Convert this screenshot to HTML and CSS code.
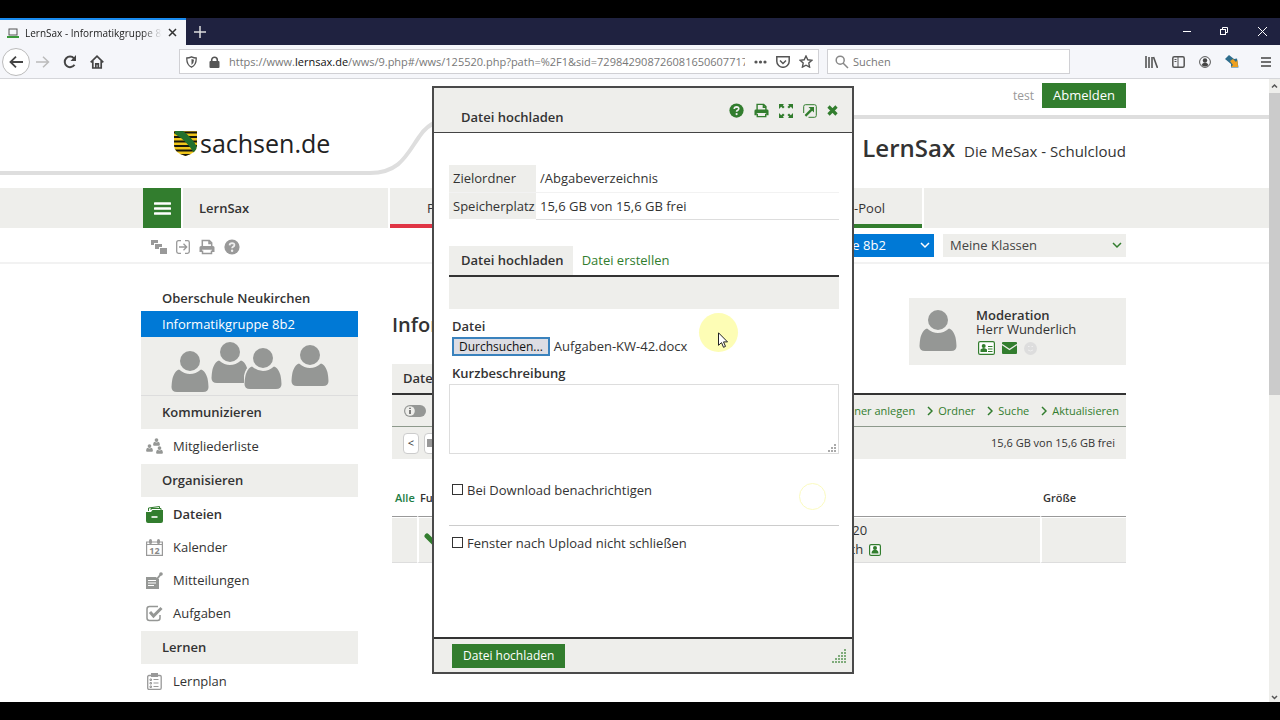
FILE: index.html
```html
<!DOCTYPE html>
<html lang="de">
<head>
	<meta charset="UTF-8">
	<meta name="viewport" content="width=device-width, initial-scale=1.0">
	<title>LernSax - Informatikgruppe 8b2</title>
	<link rel="stylesheet" href="styles.css">
</head>
<body>
	<svg class="sprite" aria-hidden="true">
		<symbol id="person" viewBox="0 0 38 41">
			<circle cx="19" cy="10" r="10"/>
			<path d="M8 18.500Q19 27.500 30 18.500Q37 21 37.500 36Q37.500 41 32 41H6Q.5 41 .5 36Q1 21 8 18.500z"/>
		</symbol>
		<symbol id="help" viewBox="0 0 16 16">
			<circle cx="8" cy="8" r="7.600" fill="currentColor"/>
			<path d="M5.600 6.400Q5.700 4.100 8.100 4.100Q10.500 4.200 10.400 6.100Q10.300 7.300 8.900 7.900Q8.100 8.300 8.100 9.300" fill="none" stroke="#eee" stroke-width="1.800"/>
			<circle cx="8.100" cy="11.800" r="1.200" fill="#eee"/>
		</symbol>
		<symbol id="print" viewBox="0 0 16 16">
			<path d="M3.300 7.500V1.500h7l2.400 2.400v3.600M10 1.500v3h2.700" fill="none" stroke="currentColor" stroke-width="1.500"/>
			<path d="M2 7h12q1.500 0 1.500 1.500V13H13v-2.300H3V13H.5V8.500Q.5 7 2 7z" fill="currentColor"/>
			<path d="M3.500 11.500v3h9v-3" fill="none" stroke="currentColor" stroke-width="1.500"/>
		</symbol>
		<symbol id="chevron" viewBox="0 0 10 10">
			<path d="M1 3l4 4 4-4" fill="none" stroke="currentColor" stroke-width="1.500"/>
		</symbol>
		<symbol id="next" viewBox="0 0 6 10">
			<path d="M1 1l4 4-4 4" fill="none" stroke="currentColor" stroke-width="1.500"/>
		</symbol>
	</svg>

	<div class="tabbar">
		<div class="tab">
			<svg width="12" height="10" viewBox="0 0 12 10"><rect x="2" y="1" width="8" height="6" fill="none" stroke="#555"/><path d="M0 9h12" stroke="#3a9a3a" stroke-width="2"/></svg>
			<span class="tab-title">LernSax - Informatikgruppe 8b2</span>
			<button class="plain" aria-label="Tab schließen"><svg width="9" height="9" viewBox="0 0 9 9"><path d="M1 1l7 7M8 1L1 8" stroke="#333" stroke-width="1.500"/></svg></button>
		</div>
		<button class="plain new-tab" aria-label="Neuer Tab"><svg width="12" height="12" viewBox="0 0 12 12"><path d="M6 0v12M0 6h12" stroke="#ddd" stroke-width="1.500"/></svg></button>
		<div class="window-buttons">
			<button class="plain" aria-label="Minimieren"><svg width="8" height="9" viewBox="0 0 8 9"><path d="M0 4.500h8" stroke="#fff"/></svg></button>
			<button class="plain" aria-label="Verkleinern"><svg width="9" height="9" viewBox="0 0 9 9" fill="none" stroke="#fff"><rect x=".5" y="2.500" width="5" height="5"/><path d="M2.500 2.500v-2h5v5h-2"/></svg></button>
			<button class="plain" aria-label="Schließen"><svg width="9" height="9" viewBox="0 0 9 9"><path d="M0 0l9 9M9 0L0 9" stroke="#fff"/></svg></button>
		</div>
	</div>

	<div class="toolbar">
		<div class="toolbar-nav">
			<button class="plain back" aria-label="Zurück"><svg width="14" height="12" viewBox="0 0 14 12"><path d="M14 6H1.500M7 .7L1.500 6 7 11.300" fill="none" stroke="#444" stroke-width="1.800"/></svg></button>
			<button class="plain" aria-label="Vor"><svg width="14" height="12" viewBox="0 0 14 12"><path d="M0 6h12.500M7 .7L12.500 6 7 11.300" fill="none" stroke="#bbb" stroke-width="1.500"/></svg></button>
			<button class="plain" aria-label="Neu laden"><svg width="14" height="14" viewBox="0 0 14 14"><path d="M11.500 9.700A5.300 5.300 0 1 1 11 3.300" fill="none" stroke="#444" stroke-width="2"/><path d="M13 0v6H7.500z" fill="#444"/></svg></button>
			<button class="plain" aria-label="Startseite"><svg width="14" height="14" viewBox="0 0 14 14" fill="none" stroke="#444" stroke-width="1.700"><path d="M.7 7.300L7 1.200l6.300 6.100M2.800 6v7h8.400V6"/><path d="M5.800 13V8.800h2.500V13"/></svg></button>
		</div>
		<div class="urlbar">
			<svg width="11" height="12" viewBox="0 0 11 12"><path d="M5.500.8Q8 2 10.200 2Q10.500 9 5.500 11.200Q.5 9 .8 2Q3 2 5.500.8z" fill="none" stroke="#555" stroke-width="1.300"/><path d="M5.500 3v6Q8 7 8 3.800z" fill="#555"/></svg>
			<svg class="lock" width="11" height="12" viewBox="0 0 11 12"><rect x=".5" y="5" width="10" height="7" rx="1" fill="#555"/><path d="M2.700 6V4a2.800 2.800 0 0 1 5.600 0v2" fill="none" stroke="#555" stroke-width="1.600"/></svg>
			<span class="url">https://www.<b>lernsax.de</b>/wws/9.php#/wws/125520.php?path=%2F1&amp;sid=72984290872608165060771721</span>
			<svg width="13" height="4" viewBox="0 0 13 4" fill="#555"><circle cx="2" cy="2" r="1.600"/><circle cx="6.500" cy="2" r="1.600"/><circle cx="11" cy="2" r="1.600"/></svg>
			<svg width="14" height="12" viewBox="0 0 14 12" fill="none" stroke="#555" stroke-width="1.500"><path d="M.8.8h12.400v4.500a6.200 6 0 0 1-12.400 0z"/><path d="M4 4.500l3 3 3-3"/></svg>
			<svg width="14" height="13" viewBox="0 0 14 13"><path d="M7 1l1.800 3.800 4 .5-3 2.800.8 4L7 10.200 3.400 12.100l.8-4-3-2.800 4-.5z" fill="none" stroke="#555" stroke-width="1.400"/></svg>
		</div>
		<label class="searchbar">
			<svg width="14" height="14" viewBox="0 0 14 14" fill="none" stroke="#888" stroke-width="1.500"><circle cx="5.200" cy="5.200" r="4"/><path d="M8 8l5 5"/></svg>
			<input type="text" placeholder="Suchen" aria-label="Suchen">
		</label>
		<div class="toolbar-tools">
			<svg width="13" height="12" viewBox="0 0 13 12" stroke="#555" stroke-width="1.600"><path d="M1 0v12M4 1v11M7 1v11M8.500 1l4 11"/></svg>
			<svg width="13" height="12" viewBox="0 0 13 12"><rect x=".8" y=".8" width="11.400" height="10.400" rx="1.500" fill="none" stroke="#555" stroke-width="1.500"/><path d="M6 1v10M2.500 3.500h2M2.500 5.500h2" stroke="#555"/></svg>
			<svg width="12" height="12" viewBox="0 0 12 12"><circle cx="6" cy="6" r="5.400" fill="none" stroke="#555"/><circle cx="6" cy="4.500" r="2.200" fill="#444"/><path d="M2.500 9q1-2.200 3.500-2.200T9.500 9Q6 12 2.500 9z" fill="#444"/></svg>
			<svg width="14" height="13" viewBox="0 0 14 13"><path d="M0 4l4-4 5 4 3-.5 1.500 9H6V9z" fill="#2d6d8c"/><path d="M5 6l3-2 3 3 1.500-2L13 12H6l2-2z" fill="#eea020"/></svg>
			<svg class="menu" width="10" height="10" viewBox="0 0 10 10"><path d="M0 1h10M0 5h10M0 9h10" stroke="#444" stroke-width="1.500"/></svg>
		</div>
	</div>

	<div class="viewport">
		<div class="page">
			<header class="header">
				<svg class="swoosh" viewBox="0 0 1269 109"><path d="M0 94H370C400 94 407 75 419 58C429 42 443 38 476 38H1269" fill="none" stroke="#dedede" stroke-width="4"/></svg>
				<div class="container">
					<div class="account">
						<span>test</span>
						<button class="button logout">Abmelden</button>
					</div>
					<div class="brands">
						<a href="#" class="sachsen">
							<svg width="23" height="25" viewBox="0 0 23 25">
								<clipPath id="shield"><path d="M0 0h23v14q0 8-11.500 11Q0 22 0 14z"/></clipPath>
								<g clip-path="url(#shield)">
									<rect width="23" height="25" fill="#efc51b"/>
									<path d="M0 1.500h23M0 6h23M0 10.500h23M0 15h23M0 19.500h23M0 24h23" stroke="#17170d" stroke-width="2"/>
									<path d="M1 0h8q10 7 15 18l-4 4Q13 10 1 3z" fill="#22702c"/>
								</g>
							</svg>
							<span>sachsen.de</span>
						</a>
						<div class="lernsax">
							<span class="brand-dot"></span>
							<strong>LernSax</strong>
							<span>Die MeSax - Schulcloud</span>
						</div>
					</div>
				</div>
			</header>

			<nav class="nav">
				<div class="container">
					<button class="nav-menu" aria-label="Menü"><svg width="17" height="13" viewBox="0 0 17 13"><path d="M1 1.500h15M1 6.500h15M1 11.500h15" stroke="#fff" stroke-width="2.600" stroke-linecap="round"/></svg></button>
					<a href="#" class="nav-home">LernSax</a>
					<a href="#" class="nav-private">Privat</a>
					<a href="#" class="nav-institution">Institution</a>
					<a href="#" class="nav-pool">Medien-Pool</a>
				</div>
			</nav>

			<div class="subbar">
				<div class="container">
					<div class="subbar-icons">
						<svg width="16" height="14" viewBox="0 0 16 14" fill="#999" stroke="#fff"><rect x="-.5" y="-.5" width="8" height="6"/><rect x="3.500" y="3.500" width="8" height="6"/><rect x="8.500" y="7.500" width="8" height="7"/></svg>
						<svg width="14" height="14" viewBox="0 0 14 14" fill="none" stroke="#999" stroke-width="1.300"><path d="M5 .7H2.500Q.7.700.7 2.500v9q0 1.800 1.800 1.800H5M9 .7h2.500q1.800 0 1.800 1.800v9q0 1.800-1.800 1.800H9M3 7h7.500M7.500 3.800L10.700 7 7.500 10.200"/></svg>
						<svg width="16" height="16"><use href="#print"/></svg>
						<svg width="16" height="16"><use href="#help"/></svg>
					</div>
					<div class="select current">
						<select aria-label="Gruppe"><option>Informatikgruppe 8b2</option></select>
						<svg width="10" height="10"><use href="#chevron"/></svg>
					</div>
					<div class="select">
						<select aria-label="Klassen"><option>Meine Klassen</option></select>
						<svg width="10" height="10"><use href="#chevron"/></svg>
					</div>
				</div>
			</div>

			<div class="container content">
				<aside class="sidebar">
					<div class="school">Oberschule Neukirchen</div>
					<a href="#" class="group">Informatikgruppe 8b2</a>
					<div class="members">
						<svg viewBox="0 0 217 57" fill="#959795">
							<use href="#person" x="30" y="13" width="38" height="41"/>
							<use href="#person" x="70" y="4" width="38" height="41"/>
							<use href="#person" x="103" y="10" width="38" height="41" stroke="#eeeeeb" stroke-width="3"/>
							<use href="#person" x="103" y="10" width="38" height="41"/>
							<use href="#person" x="150" y="7" width="38" height="41"/>
						</svg>
					</div>
					<h2>Kommunizieren</h2>
					<ul>
						<li><a href="#"><svg width="17" height="17" viewBox="0 0 17 17" fill="#959795"><use href="#person" x="0" y="6" width="7" height="8"/><use href="#person" x="7" y="0" width="7" height="8"/><use href="#person" x="10" y="8" width="7" height="8"/></svg>Mitgliederliste</a></li>
					</ul>
					<h2>Organisieren</h2>
					<ul>
						<li><a href="#" class="active"><svg width="17" height="17" viewBox="0 0 17 17"><path d="M2.500 5V2l11-1.500V3M5 4V2.500h10V5" fill="none" stroke="#327d2e"/><path d="M0 6h5l1.500-2H17v11q0 2-2 2H2q-2 0-2-2z" fill="#327d2e"/><path d="M5.500 11h6" stroke="#fff" stroke-width="1.600"/></svg>Dateien</a></li>
						<li><a href="#"><svg width="17" height="17" viewBox="0 0 17 17"><path d="M.6 3h15.800v13.400H.6zM.6 5.500h15.800" fill="none" stroke="#999" stroke-width="1.200"/><rect x="3" y="0" width="3" height="5" rx="1.500" fill="#999"/><rect x="11" y="0" width="3" height="5" rx="1.500" fill="#999"/><text x="8.500" y="14.500" text-anchor="middle" class="cal-day">12</text></svg>Kalender</a></li>
						<li><a href="#"><svg width="17" height="17" viewBox="0 0 17 17"><path d="M0 5h10l2 2h1v10H0z" fill="#959795"/><path d="M2 8.500h8M2 11h8M2 13.500h6" stroke="#fff"/><path d="M11 7l4-5" stroke="#959795" stroke-width="2"/><circle cx="15" cy="2" r="1.800" fill="#959795"/></svg>Mitteilungen</a></li>
						<li><a href="#"><svg width="17" height="17" viewBox="0 0 17 17" fill="none" stroke="#959795"><path d="M14 10v3q0 2.500-2.500 2.500h-8Q1 15.500 1 13V4q0-2.500 2.500-2.500H12" stroke-width="1.500"/><path d="M4 7l3.500 4L15.500 3" stroke-width="3"/></svg>Aufgaben</a></li>
					</ul>
					<h2>Lernen</h2>
					<ul>
						<li><a href="#"><svg width="17" height="17" viewBox="0 0 17 17" fill="none" stroke="#999"><rect x="1.700" y="2.500" width="13.500" height="13.800" rx="1.200" stroke-width="1.300"/><rect x="5.500" y=".5" width="6" height="3" fill="#999"/><path d="M7.500 6.500h5M7.500 10h5M7.500 13.500h5"/><path d="M4 6h1.500v1.500H4zM4 9.500h1.500V11H4zM4 13h1.500v1.500H4z"/></svg>Lernplan</a></li>
					</ul>
				</aside>

				<main class="main">
					<div class="title-row">
						<h1>Informatikgruppe 8b2</h1>
						<div class="moderation">
							<svg width="38" height="41" fill="#959795"><use href="#person"/></svg>
							<div>
								<strong>Moderation</strong>
								<span>Herr Wunderlich</span>
								<div class="contact">
									<svg width="17" height="14" viewBox="0 0 17 14"><rect x=".6" y=".6" width="15.800" height="12.800" rx="1.500" fill="#fff" stroke="#327d2e" stroke-width="1.200"/><circle cx="5.700" cy="5" r="2" fill="#327d2e"/><path d="M2.500 11V8.500Q5.700 5.500 9 8.500V11zM10 5h4.500v1H10zM10 7.500h4.500v1H10zM10 10h4.500v1H10z" fill="#327d2e"/></svg>
									<svg width="15" height="12" viewBox="0 0 15 12"><rect width="15" height="12" rx="1" fill="#327d2e"/><path d="M0 2.500l7.500 5 7.500-5" fill="none" stroke="#eeeeeb" stroke-width="1.400"/></svg>
									<svg width="13" height="13" viewBox="0 0 13 13"><circle cx="6.500" cy="6.500" r="6.500" fill="#ddd"/><path d="M4 4.500h1.500M7.500 4.500H9M4 8q2.500 2 5 0" stroke="#eee" fill="none"/></svg>
								</div>
							</div>
						</div>
					</div>
					<div class="main-tabs"><a href="#">Dateien</a></div>
					<div class="actions">
						<svg width="22" height="12" viewBox="0 0 22 12"><rect width="22" height="12" rx="6" fill="#959795"/><circle cx="6" cy="6" r="4.800" fill="#eeeeeb"/><path d="M6 5v4M6 2.700v1.300" stroke="#444" stroke-width="1.300"/></svg>
						<a href="#" class="first-action"><svg width="6" height="10"><use href="#next"/></svg>Ordner anlegen</a>
						<a href="#"><svg width="6" height="10"><use href="#next"/></svg>Ordner</a>
						<a href="#"><svg width="6" height="10"><use href="#next"/></svg>Suche</a>
						<a href="#"><svg width="6" height="10"><use href="#next"/></svg>Aktualisieren</a>
					</div>
					<div class="path">
						<button class="path-button">&lt;</button>
						<button class="path-button" aria-label="Ordner"><svg width="10" height="8" viewBox="0 0 10 8"><path d="M0 0h10v8H0z" fill="#999"/></svg></button>
						<span>15,6 GB von 15,6 GB frei</span>
					</div>
					<table class="files">
						<thead>
							<tr><th class="col-all"><a href="#">Alle</a></th><th class="col-actions">Funktion</th><th class="col-date"></th><th class="col-size">Größe</th></tr>
						</thead>
						<tbody>
							<tr>
								<td></td>
								<td><svg width="14" height="14" viewBox="0 0 14 14"><path d="M5 3l8 8" stroke="#327d2e" stroke-width="5" stroke-linecap="round"/></svg></td>
								<td><div class="changed"><span>16.10.2020</span><span>Herr Wunderlich <svg width="12" height="12" viewBox="0 0 12 12"><rect x=".6" y=".6" width="10.800" height="10.800" rx="1.500" fill="#fff" stroke="#327d2e" stroke-width="1.200"/><circle cx="6" cy="4" r="2" fill="#327d2e"/><path d="M2.500 9.500Q2.500 5.800 6 5.800T9.500 9.500z" fill="#327d2e"/></svg></span></div></td>
								<td></td>
							</tr>
						</tbody>
					</table>
				</main>
			</div>
		</div>

		<div class="scrollbar" aria-hidden="true">
			<svg width="11" height="14" viewBox="0 0 11 14"><path d="M3 8.500L5.500 6 8 8.500" fill="none" stroke="#555" stroke-width="1.500"/></svg>
			<div class="thumb"></div>
			<svg width="11" height="10" viewBox="0 0 11 10"><path d="M3 4l2.500 2.500L8 4" fill="none" stroke="#555" stroke-width="1.500"/></svg>
		</div>

		<div class="dialog" role="dialog" aria-labelledby="dialog-title">
			<div class="dialog-head">
				<span id="dialog-title">Datei hochladen</span>
				<div class="dialog-tools">
					<button class="plain" aria-label="Hilfe"><svg width="15" height="15"><use href="#help"/></svg></button>
					<button class="plain" aria-label="Drucken"><svg width="15" height="15"><use href="#print"/></svg></button>
					<button class="plain" aria-label="Vollbild"><svg width="14" height="14" viewBox="0 0 14 14" fill="currentColor"><path d="M0 0h5L3.800 1.200l1.800 1.800-1.600 1.600-1.800-1.800L0 5zM14 0v5l-2.200-2.200L10 4.600 8.400 3l1.800-1.800L9 0zM0 14V9l2.200 2.200L4 9.400 5.600 11l-1.800 1.800L5 14zM14 14H9l1.200-1.200L8.400 11 10 9.400l1.800 1.800L14 9z"/></svg></button>
					<button class="plain" aria-label="Neues Fenster"><svg width="14" height="14" viewBox="0 0 14 14"><path d="M.7 9V2.500Q.7.700 2.500.7h9q1.800 0 1.800 1.800v9q0 1.800-1.800 1.800H5.500" fill="none" stroke="currentColor"/><path d="M5.500 3H11v5.500L9.200 6.700l-6 6-1.600-1.600 5.900-6z" fill="currentColor"/></svg></button>
					<button class="plain" aria-label="Schließen"><svg width="11" height="11" viewBox="0 0 11 11"><path d="M1.500 1.500l8 8M9.500 1.500l-8 8" stroke="currentColor" stroke-width="3.200"/></svg></button>
				</div>
			</div>
			<form class="dialog-body">
				<table class="info">
					<tr><th>Zielordner</th><td>/Abgabeverzeichnis</td></tr>
					<tr><th>Speicherplatz</th><td>15,6 GB von 15,6 GB frei</td></tr>
				</table>
				<div class="dialog-tabs">
					<a href="#" class="active">Datei hochladen</a>
					<a href="#">Datei erstellen</a>
				</div>
				<div class="strip"></div>
				<div class="field-label">Datei</div>
				<div class="file-row">
					<input type="file" id="file">
					<label for="file">Durchsuchen...</label>
					<span>Aufgaben-KW-42.docx</span>
				</div>
				<label class="field-label" for="description">Kurzbeschreibung</label>
				<div class="textarea">
					<textarea id="description"></textarea>
					<svg width="8" height="8" viewBox="0 0 8 8" fill="#aaa"><path d="M6 0h2v2H6zM3 3h2v2H3zM6 3h2v2H6zM0 6h2v2H0zM3 6h2v2H3zM6 6h2v2H6z"/></svg>
				</div>
				<label class="check notify"><input type="checkbox">Bei Download benachrichtigen</label>
				<label class="check keep-open"><input type="checkbox">Fenster nach Upload nicht schließen</label>
			</form>
			<div class="dialog-foot">
				<button class="button upload">Datei hochladen</button>
				<svg width="15" height="15" viewBox="0 0 15 15" stroke="#7fab7b" stroke-width="2" stroke-dasharray="2 1"><path d="M0 14h15M3 11h12M6 8h9M9 5h6M12 2h3"/></svg>
			</div>
		</div>

		<div class="click-ring"></div>
		<div class="pointer">
			<svg width="10" height="16" viewBox="0 0 10 16"><path d="M.5.800v12.500l3-2.700 2 4.700 2-.9-2-4.500h4z" fill="#fff" stroke="#222"/></svg>
		</div>
	</div>
</body>
</html>
```
FILE: styles.css
```css
* {
	box-sizing: border-box;
}
body {
	background-color: #000;
	color: #333;
	font-family: "Open Sans", "Noto Sans", sans-serif;
	font-size: 13px;
	line-height: 18px;
	margin: 0;
	padding: 18px 0;
	height: 100vh;
	display: flex;
	flex-direction: column;
}
a {
	color: inherit;
	text-decoration: none;
}
svg {
	flex: none;
	display: block;
}
button, input, select, textarea {
	font: inherit;
	color: inherit;
}
button {
	cursor: pointer;
}
.sprite {
	position: absolute;
	width: 0;
	height: 0;
}
.plain {
	background: none;
	border: none;
	padding: 0;
}
.button {
	background-color: #327d2e;
	color: #fff;
	border: none;
	padding: 3px 11px;
}

/* browser window */
.tabbar {
	background-color: #1f2240;
	height: 27px;
	display: flex;
	align-items: center;
}
.tab {
	background-color: #f5f6fa;
	border-top: 2px solid #1a8cf0;
	width: 186px;
	height: 27px;
	padding: 0 9px 0 7px;
	display: flex;
	align-items: center;
	gap: 6px;
	color: #222;
	font-size: 10px;
}
.tab-title {
	flex: 1;
	overflow: hidden;
	white-space: nowrap;
	-webkit-mask-image: linear-gradient(to right, #000 85%, transparent);
	mask-image: linear-gradient(to right, #000 85%, transparent);
}
.new-tab {
	margin-left: 8px;
}
.window-buttons {
	margin-left: auto;
	padding-right: 13px;
	display: flex;
	gap: 29px;
}
.toolbar {
	background-color: #f5f6fa;
	border-bottom: 1px solid #d5d6da;
	height: 34px;
	flex: none;
	display: flex;
	align-items: center;
}
.toolbar-nav {
	width: 179px;
	padding-left: 2px;
	display: flex;
	align-items: center;
	gap: 13px;
}
.toolbar-nav .back {
	background-color: #fff;
	border: 1px solid #bbb;
	border-radius: 50%;
	width: 28px;
	height: 28px;
	padding-left: 6px;
	margin-right: -7px;
}
.urlbar, .searchbar {
	background-color: #fff;
	border: 1px solid #d0d0d4;
	height: 25px;
	display: flex;
	align-items: center;
}
.urlbar {
	flex: 1;
	min-width: 0;
	padding: 0 5px 0 6px;
	gap: 9px;
}
.lock {
	margin-left: 3px;
}
.url {
	flex: 1;
	overflow: hidden;
	white-space: nowrap;
	color: #777;
	font-size: 11px;
}
.url b {
	color: #111;
	font-weight: 400;
}
.searchbar {
	width: 243px;
	margin-left: 8px;
	padding-left: 7px;
	gap: 4px;
}
.searchbar input {
	border: none;
	outline: none;
	width: 100%;
	padding: 0;
	font-size: 11px;
}
.searchbar input::placeholder {
	color: #777;
}
.toolbar-tools {
	width: 210px;
	padding-right: 9px;
	display: flex;
	align-items: center;
	justify-content: flex-end;
	gap: 14px;
}
.menu {
	margin-left: 8px;
}

.viewport {
	background-color: #fff;
	flex: 1;
	min-height: 0;
	display: flex;
	position: relative;
	overflow: hidden;
}
.page {
	flex: 1;
	min-width: 0;
}
.container {
	max-width: 987px;
	margin: 0 auto;
	padding-right: 2px;
}
.scrollbar {
	background-color: #eeeeeb;
	width: 11px;
	display: flex;
	flex-direction: column;
}
.thumb {
	background-color: #cbcbcb;
	height: 302px;
	margin-bottom: auto;
}

/* header */
.header {
	position: relative;
	height: 109px;
	padding-top: 4px;
}
.header .container {
	position: relative;
}
.swoosh {
	position: absolute;
	top: 0;
	left: 0;
	width: 100%;
}
.account {
	display: flex;
	justify-content: flex-end;
	gap: 8px;
	color: #999;
	font-size: 12px;
	line-height: 25px;
}
.logout {
	font-size: 13px;
	line-height: 19px;
}
.brands {
	display: flex;
	align-items: flex-start;
	justify-content: space-between;
	padding-left: 33px;
	margin-top: 18px;
}
.sachsen {
	color: #222;
	font-size: 25px;
	line-height: 34px;
	display: flex;
	align-items: center;
	gap: 3px;
}
.lernsax {
	display: flex;
	align-items: baseline;
	gap: 9px;
	font-size: 15px;
	line-height: 36px;
	padding-top: 4px;
}
.lernsax strong {
	font-size: 24px;
	font-weight: 600;
}
.brand-dot {
	background-color: #327d2e;
	width: 6px;
	height: 4px;
}

/* navigation */
.nav {
	background-color: #eeeeeb;
}
.nav .container {
	display: flex;
	padding-left: 2px;
	height: 40px;
	line-height: 40px;
}
.nav a {
	border-right: 2px solid #fff;
	padding: 0 37px;
	width: 178px;
}
.nav-menu {
	background-color: #327d2e;
	border: none;
	width: 38px;
	padding: 0 11px;
}
.nav .nav-home {
	border-left: 2px solid #fff;
	padding: 0 16px;
	width: 209px;
	font-weight: 600;
}
.nav-private {
	box-shadow: inset 0 -4px #e03545;
}
.nav-institution {
	box-shadow: inset 0 -4px #0079d6;
}
.nav-pool {
	box-shadow: inset 0 -4px #327d2e;
	text-align: right;
}
.subbar {
	border-bottom: 2px solid #f2f2f2;
}
.subbar .container {
	display: flex;
	align-items: center;
	gap: 9px;
	height: 34px;
}
.subbar-icons {
	color: #999;
	padding-top: 3px;
	padding-left: 10px;
	margin-right: auto;
	display: flex;
	align-items: center;
	gap: 9px;
}
.select {
	position: relative;
	width: 183px;
	color: #327d2e;
}
.select select {
	appearance: none;
	background-color: #eeeeeb;
	color: #444;
	border: none;
	border-radius: 0;
	width: 100%;
	height: 23px;
	padding: 0 7px;
	display: block;
}
.select.current, .select.current select {
	background-color: #0079d6;
	color: #fff;
}
.select.current select {
	padding-left: 2px;
}
.select svg {
	position: absolute;
	top: 6px;
	right: 4px;
	pointer-events: none;
}

/* sidebar */
.content {
	display: flex;
	gap: 34px;
	padding-top: 21px;
}
.sidebar {
	width: 217px;
	flex: none;
}
.school, .group, .sidebar h2 {
	padding-left: 21px;
}
.school {
	font-weight: 600;
	line-height: 26px;
}
.group {
	display: block;
	background-color: #0079d6;
	color: #fff;
	line-height: 26px;
}
.members {
	background-color: #eeeeeb;
	border-bottom: 1px solid #ddd;
	padding-top: 1px;
}
.sidebar h2 {
	background-color: #eeeeeb;
	font-size: 13px;
	font-weight: 600;
	line-height: 33px;
	margin: 0;
}
.sidebar ul {
	list-style: none;
	margin: 0;
	padding: 1px 0;
}
.sidebar li a {
	display: flex;
	align-items: center;
	gap: 10px;
	padding-left: 5px;
	line-height: 33px;
}
.sidebar .active {
	font-weight: 600;
}
.cal-day {
	fill: #888;
	font-size: 9px;
	font-weight: 700;
}

/* files */
.main {
	flex: 1;
	min-width: 0;
}
.title-row {
	display: flex;
	align-items: flex-start;
	justify-content: space-between;
	padding-top: 13px;
	height: 79px;
}
.title-row h1 {
	font-size: 20px;
	font-weight: 600;
	line-height: 28px;
	margin: 13px 0 0;
}
.moderation {
	background-color: #eeeeeb;
	width: 217px;
	height: 67px;
	padding: 9px 10px;
	display: flex;
	gap: 19px;
	line-height: 14px;
}
.moderation svg {
	margin-top: 3px;
}
.moderation strong {
	display: block;
	font-weight: 600;
	padding-top: 1px;
}
.contact {
	display: flex;
	align-items: center;
	gap: 7px;
	padding: 2px 0 0 2px;
}
.main-tabs {
	border-bottom: 2px solid #333;
	font-weight: 600;
	display: flex;
}
.main-tabs a {
	background-color: #eeeeeb;
	padding: 0 11px;
	line-height: 29px;
}
.actions, .path {
	background-color: #eeeeeb;
	display: flex;
	align-items: center;
}
.actions {
	border-bottom: 1px solid #8d998c;
	color: #327d2e;
	height: 32px;
	padding: 0 7px 0 12px;
	font-size: 11px;
	gap: 12px;
}
.actions a {
	display: flex;
	align-items: center;
	gap: 5px;
}
.first-action {
	margin-left: auto;
}
.path {
	height: 32px;
	padding: 0 11px;
	gap: 5px;
	font-size: 11px;
}
.path span {
	margin-left: auto;
}
.path-button {
	background-color: #fff;
	border: 1px solid #ccc;
	border-radius: 4px;
	width: 16px;
	height: 21px;
	padding: 0 2px;
	line-height: 18px;
}
.files {
	border-collapse: separate;
	border-spacing: 0;
	table-layout: fixed;
	width: 100%;
	margin-top: 21px;
}
.files th {
	border-bottom: 1px solid #999;
	font-size: 11px;
	font-weight: 600;
	text-align: left;
	padding: 0 3px;
	height: 37px;
}
.files td {
	background-color: #eeeeeb;
	border-top: 1px solid #fff;
	border-bottom: 1px solid #ddd;
	padding: 3px;
}
.files th + th {
	padding-left: 1px;
}
.files th + th, .files td + td {
	border-left: 2px solid #fff;
}
.files a {
	color: #1d7d45;
}
.col-all {
	width: 25px;
}
.col-actions {
	width: 341px;
}
.col-size {
	width: 86px;
}
.changed {
	display: inline-flex;
	flex-direction: column;
	align-items: flex-end;
	line-height: 19px;
}
.changed span {
	display: flex;
	align-items: center;
	gap: 6px;
}
.changed span:first-child {
	padding-right: 14px;
}

/* dialog */
.dialog {
	position: absolute;
	top: 7px;
	left: 432px;
	width: 422px;
	background-color: #fff;
	border: 2px solid #4a4a4a;
}
.dialog-head {
	background-color: #eeeeeb;
	border-bottom: 1px solid #444;
	display: flex;
	align-items: flex-start;
	justify-content: space-between;
	height: 45px;
	padding: 15px 14px 0 27px;
	font-weight: 600;
}
#dialog-title {
	padding-top: 5px;
}
.dialog-tools {
	color: #327d2e;
	display: flex;
	align-items: center;
	gap: 10px;
}
.dialog-body {
	height: 504px;
	padding: 32px 13px 0 15px;
}
.info {
	border-collapse: collapse;
	width: 100%;
}
.info th {
	background-color: #eeeeeb;
	font-weight: 400;
	text-align: left;
	width: 87px;
	padding: 0 0 0 4px;
}
.info td {
	padding: 0 4px;
	height: 27px;
	border-bottom: 1px solid #ddd;
}
.info tr:first-child > * {
	border-bottom: 1px solid #f2f2f2;
}
.dialog-tabs {
	border-bottom: 2px solid #333;
	margin-top: 26px;
	display: flex;
}
.dialog-tabs a {
	color: #327d2e;
	line-height: 29px;
	padding: 0 9px;
}
.dialog-tabs .active {
	background-color: #eeeeeb;
	color: #333;
	font-weight: 600;
	padding-left: 12px;
}
.strip {
	background-color: #eeeeeb;
	height: 32px;
	margin-bottom: 8px;
}
.field-label {
	display: block;
	font-weight: 600;
	padding-left: 3px;
}
.file-row {
	display: flex;
	align-items: center;
	gap: 4px;
	padding-left: 3px;
	margin: 2px 0 8px;
}
.file-row input {
	position: absolute;
	width: 0;
	height: 0;
	opacity: 0;
}
.file-row label {
	background-color: #dddde4;
	border: 2px solid #3a82bd;
	color: #111;
	font-size: 12px;
	line-height: 15px;
	padding: 0 5px;
}
.textarea {
	position: relative;
	margin-top: 2px;
}
.textarea textarea {
	display: block;
	border: 1px solid #ddd;
	width: 100%;
	height: 70px;
	resize: none;
}
.textarea svg {
	position: absolute;
	right: 3px;
	bottom: 2px;
}
.check {
	display: flex;
	align-items: center;
	gap: 4px;
	padding-left: 3px;
}
.check input {
	appearance: none;
	background-color: #fff;
	border: 1px solid #333;
	width: 11px;
	height: 11px;
	margin: 0;
}
.notify {
	padding-top: 27px;
	padding-bottom: 26px;
	border-bottom: 1px solid #ccc;
}
.keep-open {
	padding-top: 8px;
}
.dialog-foot {
	background-color: #eeeeeb;
	border-top: 2px solid #333;
	height: 35px;
	padding: 0 5px 0 18px;
	display: flex;
	align-items: center;
	justify-content: space-between;
}
.upload {
	font-size: 12px;
}

/* mouse pointer */
.pointer {
	position: absolute;
	top: 234px;
	left: 699px;
	width: 39px;
	height: 39px;
	padding: 19px 0 0 19px;
	border-radius: 50%;
	background-color: #fdfdb5;
}
.click-ring {
	position: absolute;
	top: 404px;
	left: 799px;
	width: 27px;
	height: 27px;
	border: 1px solid #fbfbc0;
	border-radius: 50%;
}
```
